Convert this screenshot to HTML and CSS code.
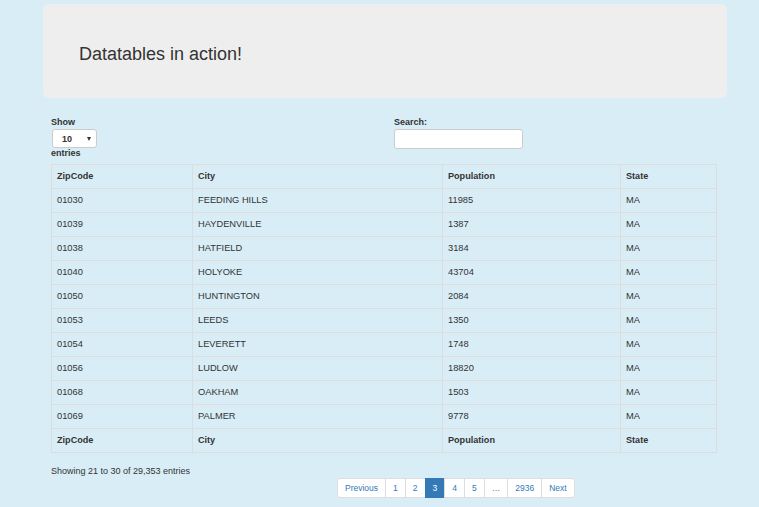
FILE: index.html
```html
<!DOCTYPE html>
<html>
<head>
<meta charset="utf-8">
<title>Datatables in action!</title>
<link rel="stylesheet" href="styles.css">
</head>
<body>
<div class="page">
  <div class="jumbotron"><h1 class="title">Datatables in action!</h1></div>
  <div class="dt">
    <div class="controls">
      <div class="length">
        <div class="lbl">Show</div>
        <div class="select"><span class="sel-val">10</span><span class="caret"></span></div>
        <div class="lbl">entries</div>
      </div>
      <div class="filter">
        <div class="lbl">Search:</div>
        <input class="search" type="text">
      </div>
    </div>
    <table class="table">
      <colgroup>
        <col class="c1"><col class="c2"><col class="c3"><col class="c4">
      </colgroup>
      <thead>
        <tr><th>ZipCode</th><th>City</th><th>Population</th><th>State</th></tr>
      </thead>
      <tbody>
        <tr><td>01030</td><td>FEEDING HILLS</td><td>11985</td><td>MA</td></tr>
        <tr><td>01039</td><td>HAYDENVILLE</td><td>1387</td><td>MA</td></tr>
        <tr><td>01038</td><td>HATFIELD</td><td>3184</td><td>MA</td></tr>
        <tr><td>01040</td><td>HOLYOKE</td><td>43704</td><td>MA</td></tr>
        <tr><td>01050</td><td>HUNTINGTON</td><td>2084</td><td>MA</td></tr>
        <tr><td>01053</td><td>LEEDS</td><td>1350</td><td>MA</td></tr>
        <tr><td>01054</td><td>LEVERETT</td><td>1748</td><td>MA</td></tr>
        <tr><td>01056</td><td>LUDLOW</td><td>18820</td><td>MA</td></tr>
        <tr><td>01068</td><td>OAKHAM</td><td>1503</td><td>MA</td></tr>
        <tr><td>01069</td><td>PALMER</td><td>9778</td><td>MA</td></tr>
      </tbody>
      <tfoot>
        <tr><th>ZipCode</th><th>City</th><th>Population</th><th>State</th></tr>
      </tfoot>
    </table>
    <div class="bottom">
      <div class="info">Showing 21 to 30 of 29,353 entries</div>
      <ul class="pagination">
        <li class="pg first"><a href="#">Previous</a></li>
        <li class="pg"><a href="#">1</a></li>
        <li class="pg"><a href="#">2</a></li>
        <li class="pg active"><a href="#">3</a></li>
        <li class="pg"><a href="#">4</a></li>
        <li class="pg"><a href="#">5</a></li>
        <li class="pg"><a href="#">…</a></li>
        <li class="pg"><a href="#">2936</a></li>
        <li class="pg last"><a href="#">Next</a></li>
      </ul>
    </div>
  </div>
</div>
</body>
</html>
```
FILE: styles.css
```css
body {
  margin: 0;
  background: #d9edf7;
  font-family: "Liberation Sans", Arial, sans-serif;
  font-size: 9px;
  color: #333;
}
.page {
  padding-top: 4px;
}
.jumbotron {
  margin-left: 43px;
  width: 684px;
  height: 94px;
  box-sizing: border-box;
  background: #eee;
  border-radius: 6px;
  padding: 40px 36px 0;
}
.title {
  margin: 0;
  font-size: 18px;
  font-weight: normal;
  line-height: 20px;
  color: #333;
}
.dt {
  margin-left: 51px;
  width: 665px;
  padding-top: 19px;
}
.controls {
  display: grid;
  grid-template-columns: 1fr 1fr;
  column-gap: 21px;
}
.lbl {
  font-weight: bold;
  line-height: 11px;
}
.select {
  margin: 1px 0 0 1px;
  width: 45px;
  height: 19px;
  box-sizing: border-box;
  background: #fff;
  border: 1px solid #ccc;
  border-radius: 3px;
  display: flex;
  align-items: center;
  justify-content: space-between;
  padding: 0 5px 0 9px;
}
.sel-val {
  font-weight: bold;
}
.caret {
  width: 0;
  height: 0;
  border-left: 2.5px solid transparent;
  border-right: 2.5px solid transparent;
  border-top: 4px solid #333;
}
.search {
  display: block;
  margin: 1px 0 0 0;
  width: 129px;
  height: 20px;
  box-sizing: border-box;
  background: #fff;
  border: 1px solid #ccc;
  border-radius: 3px;
  padding: 0 4px;
  font-family: inherit;
  font-size: 9px;
}
.table {
  margin-top: 5px;
  width: 665px;
  border-collapse: collapse;
  table-layout: fixed;
}
.c1 { width: 141px; }
.c2 { width: 250px; }
.c3 { width: 178px; }
.c4 { width: 96px; }
.table th,
.table td {
  border: 1px solid #ddd;
  padding: 5px 5px 5px 5px;
  line-height: 13px;
  text-align: left;
  color: #333;
}
.table td {
  font-size: 9.3px;
}
.table th {
  font-size: 9.1px;
  font-weight: bold;
}
.bottom {
  display: grid;
  grid-template-columns: 265px 1fr;
  column-gap: 21px;
  margin-top: 12px;
}
.info {
  line-height: 13px;
}
.pagination {
  margin: 13px 0 0 0;
  padding: 0;
  list-style: none;
  display: flex;
}
.pg a {
  display: block;
  height: 20px;
  box-sizing: border-box;
  padding: 0 7px;
  line-height: 18px;
  border: 1px solid #ddd;
  margin-left: -1px;
  background: #fff;
  color: #337ab7;
  font-size: 8.5px;
  text-decoration: none;
}
.pg.first a {
  margin-left: 0;
  border-radius: 3px 0 0 3px;
}
.pg.last a {
  border-radius: 0 3px 3px 0;
}
.pg.active a {
  background: #337ab7;
  border-color: #337ab7;
  color: #fff;
}
```
